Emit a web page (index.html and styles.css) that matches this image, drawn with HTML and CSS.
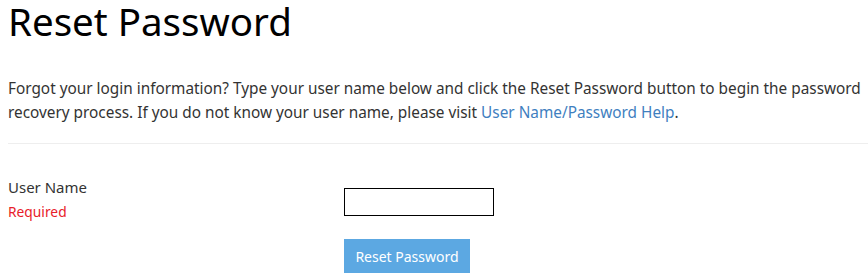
FILE: index.html
```html
<!DOCTYPE html>
<html lang="en">
<head>
    <meta charset="UTF-8">
    <title>Reset Password</title>
    <link rel="stylesheet" href="styles.css">
</head>
<body>
    <main class="page">
        <h1 class="title">Reset Password</h1>
        <p class="intro">Forgot your login information? Type your user name below and click the Reset Password button to begin the password recovery process. If you do not know your user name, please visit <a href="#">User Name/Password Help</a>.</p>
        <hr class="divider">
        <form class="reset-form">
            <div class="field">
                <div class="field-label">
                    <label for="username">User Name</label>
                    <span class="required">Required</span>
                </div>
                <div class="field-input">
                    <input type="text" id="username">
                </div>
            </div>
            <div class="actions">
                <button type="button" class="btn">Reset Password</button>
            </div>
        </form>
    </main>
</body>
</html>
```

FILE: styles.css
```css
body{
    margin: 0;
    font-family: "Noto Sans", "Open Sans", sans-serif;
    color: #333333;
    background: #ffffff;
}
.page{
    padding: 0 0 0 8px;
}
.title{
    margin: -2px 0 0;
    font-size: 38.5px;
    font-weight: normal;
    line-height: 46px;
    color: #000000;
}
.intro{
    margin: 32px 0 0;
    padding-right: 4px;
    font-size: 15.35px;
    line-height: 24px;
}
.intro a{
    color: #3f7fbf;
    text-decoration: none;
}
.divider{
    margin: 19px 0 0;
    border: none;
    border-top: 1px solid #eeeeee;
}
.reset-form{
    padding-top: 33px;
}
.field{
    display: flex;
    align-items: flex-start;
}
.field-label{
    width: 336px;
    display: flex;
    flex-direction: column;
}
.field-label label{
    font-size: 15px;
    line-height: 20px;
}
.required{
    margin-top: 6px;
    font-size: 13.8px;
    line-height: 18px;
    color: #e8202a;
}
.field-input{
    padding-top: 11px;
}
.field-input input{
    display: block;
    width: 150px;
    height: 28px;
    box-sizing: border-box;
    border: 1px solid #000000;
    margin: 0;
    padding: 2px 4px;
}
.actions{
    margin-top: 18px;
    padding-left: 336px;
}
.btn{
    display: block;
    width: 126px;
    height: 34px;
    border: none;
    background: #5ca8e2;
    color: #ffffff;
    font-family: inherit;
    font-size: 14px;
    padding: 0;
}
```
